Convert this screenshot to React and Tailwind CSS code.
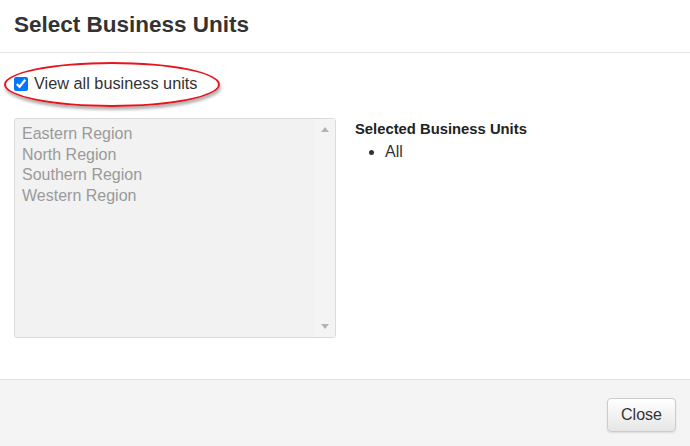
const REGIONS = ['Eastern Region', 'North Region', 'Southern Region', 'Western Region']

export default function App() {
  return (
    <div className="w-[690px] h-[446px] bg-white flex flex-col font-['Liberation_Sans',Arial,sans-serif] text-[#333]">
      {/* header */}
      <div className="h-[53px] border-b border-[#e5e5e5] px-[14px] flex items-center">
        <h4 className="text-[22.5px] font-bold leading-none pb-[1px]">Select Business Units</h4>
      </div>

      {/* body */}
      <div className="flex-1 px-[14px] pt-[22px]">
        <div className="relative h-[19px] flex items-center">
          <label className="flex items-center gap-[6px] text-[16.3px] leading-none">
            <input type="checkbox" defaultChecked className="w-[14px] h-[14px] m-0 accent-[#0075ff]" />
            <span className="-mt-[2px]">View all business units</span>
          </label>
          {/* red annotation ellipse */}
          <div className="absolute left-[-10px] top-[-13px] w-[216px] h-[45px] rounded-[50%] border-2 border-[#e8141c] shadow-[1px_3px_3px_rgba(0,0,0,0.3)] pointer-events-none" />
        </div>

        <div className="flex mt-[24px]">
          <div className="w-[322px] h-[220px] bg-[#f2f2f2] border border-[#dcdcdc] rounded-[3px] flex">
            <ul className="flex-1 pl-[7px] pt-[5px] text-[16px] leading-[20.5px] text-[#9a9a9a]">
              {REGIONS.map(r => (
                <li key={r}>{r}</li>
              ))}
            </ul>
            <div className="w-[21px] bg-[#f4f4f4] flex flex-col items-center justify-between py-[8px]">
              <div className="w-0 h-0 border-l-[4.5px] border-r-[4.5px] border-b-[5px] border-l-transparent border-r-transparent border-b-[#b3b3b3]" />
              <div className="w-0 h-0 border-l-[4.5px] border-r-[4.5px] border-t-[5px] border-l-transparent border-r-transparent border-t-[#b3b3b3]" />
            </div>
          </div>

          <div className="ml-[19px] pt-[3px]">
            <div className="text-[14.8px] font-bold leading-[16px] text-[#222]">Selected Business Units</div>
            <ul className="list-disc pl-[30px] mt-[5px] text-[16px] leading-[20px]">
              <li>All</li>
            </ul>
          </div>
        </div>
      </div>

      {/* footer */}
      <div className="h-[67px] border-t border-[#e2e2e2] bg-[#f4f4f4] flex items-center justify-end px-[14px]">
        <button className="h-[34px] w-[69px] mt-[3px] rounded-[4px] border border-[#cccccc] bg-gradient-to-b from-white to-[#e6e6e6] shadow-[0_1px_2px_rgba(0,0,0,0.1)] text-[16px] text-[#333]">
          Close
        </button>
      </div>
    </div>
  )
}
